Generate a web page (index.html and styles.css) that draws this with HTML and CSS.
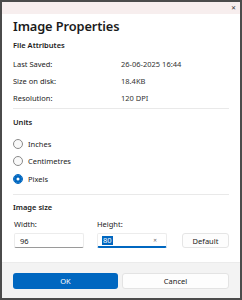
FILE: index.html
```html
<!DOCTYPE html>
<html lang="en">
<head>
<meta charset="utf-8">
<title>Image Properties</title>
<link rel="stylesheet" href="styles.css">
</head>
<body>
<div class="window">
  <div class="titlebar"><span class="close">✕</span></div>
  <div class="content">
    <h1 class="title">Image Properties</h1>
    <h2 class="section">File Attributes</h2>
    <div class="attrs">
      <div class="row"><span class="key">Last Saved:</span><span class="val">26-06-2025 16:44</span></div>
      <div class="row"><span class="key">Size on disk:</span><span class="val">18.4KB</span></div>
      <div class="row"><span class="key">Resolution:</span><span class="val">120 DPI</span></div>
    </div>
    <div class="sep"></div>
    <h2 class="section units-head">Units</h2>
    <div class="radios">
      <div class="radio"><span class="dot"></span><span>Inches</span></div>
      <div class="radio"><span class="dot"></span><span>Centimetres</span></div>
      <div class="radio"><span class="dot on"></span><span>Pixels</span></div>
    </div>
    <div class="sep sep2"></div>
    <h2 class="section size-head">Image size</h2>
    <div class="size">
      <div class="field w">
        <div class="label">Width:</div>
        <div class="input"><span>96</span></div>
      </div>
      <div class="field h">
        <div class="label">Height:</div>
        <div class="input focus"><span class="sel">80</span><span class="clear">✕</span></div>
      </div>
      <div class="field d">
        <div class="btn default">Default</div>
      </div>
    </div>
  </div>
  <div class="footer">
    <div class="btn primary">OK</div>
    <div class="btn cancel">Cancel</div>
  </div>
</div>
</body>
</html>
```
FILE: styles.css
```css
html, body {
  margin: 0;
  padding: 0;
  background: #ffffff;
}
body {
  font-family: "Noto Sans", "Open Sans", sans-serif;
  color: #1b1b1b;
}
.window {
  width: 242px;
  height: 300px;
  box-sizing: border-box;
  border: 2px solid #4b4b4b;
  display: flex;
  flex-direction: column;
  background: #ffffff;
}
.titlebar {
  height: 12px;
  background: #f7eeee;
  display: flex;
  justify-content: flex-end;
  align-items: center;
  padding-right: 4px;
}
.close {
  font-size: 6px;
  line-height: 12px;
  color: #333;
}
.content {
  padding: 0 11px;
  display: flex;
  flex-direction: column;
}
.title {
  margin: 4px 0 0;
  font-size: 12.8px;
  line-height: 16px;
  font-weight: 600;
  letter-spacing: -0.1px;
}
.section {
  margin: 6px 0 0;
  font-size: 7.5px;
  line-height: 10px;
  font-weight: 600;
}
.attrs {
  margin-top: 5px;
  font-size: 7.5px;
}
.row {
  display: flex;
  height: 17px;
  align-items: center;
}
.key {
  width: 108px;
  flex: none;
}
.val {
  color: #333;
}
.sep {
  margin-top: 2px;
  height: 1px;
  background: #e9e9e9;
}
.units-head {
  margin-top: 8px;
}
.radios {
  margin-top: 8px;
  font-size: 7.5px;
}
.radio {
  height: 17.5px;
  display: flex;
  align-items: center;
  gap: 5px;
}
.dot {
  width: 8px;
  height: 8px;
  border-radius: 50%;
  border: 1px solid #8a8a8a;
  background: #f9f9f9;
  box-sizing: content-box;
  flex: none;
}
.dot.on {
  border-color: #0067c0;
  background: #ffffff;
  box-shadow: inset 0 0 0 2.5px #0067c0;
}
.sep2 {
  margin-top: 6.5px;
}
.size-head {
  margin-top: 7px;
}
.size {
  margin-top: 7px;
  display: flex;
  align-items: flex-end;
  font-size: 7.5px;
}
.field.w {
  width: 70px;
  margin-left: 1px;
}
.field.h {
  width: 70px;
  margin-left: 13px;
}
.field.d {
  margin-left: 15px;
  width: 47px;
}
.label {
  line-height: 10px;
  margin-bottom: 4px;
}
.input {
  height: 15px;
  box-sizing: border-box;
  border: 1px solid #ececec;
  border-bottom: 1px solid #9a9a9a;
  border-radius: 2px;
  display: flex;
  align-items: center;
  padding: 0 5px;
  color: #222;
}
.input.focus {
  border-bottom: 2px solid #0067c0;
  padding-left: 4px;
  justify-content: space-between;
}
.sel {
  background: #0067c0;
  color: #ffffff;
  padding: 0 1px;
  line-height: 9px;
}
.clear {
  font-size: 5px;
  color: #666;
  margin-right: 4px;
}
.btn {
  height: 15px;
  box-sizing: border-box;
  border-radius: 3px;
  display: flex;
  align-items: center;
  justify-content: center;
  font-size: 7.5px;
}
.default {
  border: 1px solid #e5e5e5;
  background: #fdfdfd;
}
.footer {
  margin-top: auto;
  height: 36px;
  background: #f3f3f3;
  border-top: 1px solid #ebebeb;
  box-sizing: border-box;
  padding: 10px 11px 0;
  display: flex;
  gap: 4px;
}
.footer .btn {
  height: 16px;
}
.primary {
  width: 105px;
  background: #0067c0;
  color: #ffffff;
}
.cancel {
  flex: 1;
  background: #fdfdfd;
  border: 1px solid #e3e3e3;
}
```
